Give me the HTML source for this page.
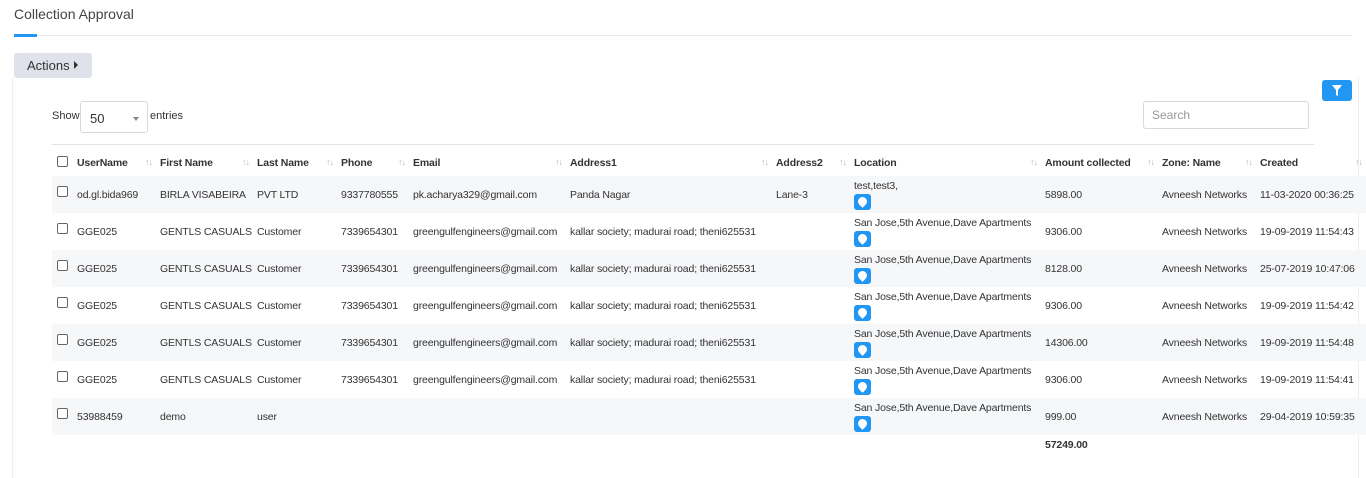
<!DOCTYPE html>
<html><head><meta charset="utf-8"><style>
*{box-sizing:border-box;margin:0;padding:0}
body{width:1366px;height:459px;overflow:hidden;background:#fff;font-family:"Liberation Sans",sans-serif;color:#333;font-size:10.5px;position:relative}
.title{position:absolute;left:14px;top:6px;font-size:14px;color:#444}
.hr{position:absolute;left:14px;top:35px;width:1338px;height:1px;background:#e8eaee}
.bl{position:absolute;left:14px;top:34px;width:23px;height:3px;background:#2196f3}
.act{position:absolute;left:14px;top:53px;width:78px;height:25px;background:#dfe2ea;border-radius:3px;font-size:13px;color:#333;padding:5px 0 0 13px}
.act i{display:inline-block;width:0;height:0;border-left:4px solid #333;border-top:4px solid transparent;border-bottom:4px solid transparent;margin-left:4px;vertical-align:1px}
.card{position:absolute;left:12px;top:78px;width:1347px;height:400px;border-left:1px solid #eceef2;border-right:1px solid #eceef2}
.filt{position:absolute;left:1322px;top:80px;width:30px;height:21px;background:#2196f3;border-radius:3px}
.show{position:absolute;left:52px;top:110px;font-size:11px}
.sel{position:absolute;left:80px;top:101px;width:68px;height:32px;border:1px solid #d5d9e2;border-radius:3px;font-size:13px;padding:9px 0 0 9px}
.sel i{position:absolute;right:8px;top:15px;border-top:4px solid #888;border-left:3px solid transparent;border-right:3px solid transparent}
.ent{position:absolute;left:150px;top:110px;font-size:11px}
.search{position:absolute;left:1143px;top:101px;width:166px;height:28px;border:1px solid #d5d9e2;border-radius:3px;color:#999;font-size:12px;padding:6px 0 0 8px}
.tl{position:absolute;left:52px;top:144px;width:1262px;height:1px;background:#e0e3e8}
table{position:absolute;left:52px;top:145px;border-collapse:collapse;table-layout:fixed;width:1314px;letter-spacing:-0.15px}
td,th{padding:0 0 0 4px;white-space:nowrap;overflow:hidden;text-align:left;vertical-align:middle;height:37px;position:relative}
th{height:31px;font-weight:bold;color:#333;font-size:10.5px;padding-top:4px}
th s{position:absolute;right:4px;top:12px;text-decoration:none;color:#bbb;font-size:9px;font-weight:normal;letter-spacing:-1px}
tr.g td{background:#f6f7f9}
.cb{display:inline-block;width:11px;height:11px;border:1px solid #666;border-radius:2px;background:#fff;margin-left:1px;vertical-align:middle;position:relative;top:-3px}
.loc{vertical-align:top;padding-top:4px;line-height:13px}
.pin{display:block;width:17px;height:16px;background:#2196f3;border-radius:3px;margin-top:1px;position:relative}
.pin:after{content:"";position:absolute;left:4px;top:3px;width:9px;height:9px;background:#fff;border-radius:50% 50% 50% 0;transform:rotate(-45deg)}
.tot td{height:20px;font-weight:bold}
</style></head><body>
<div class="title">Collection Approval</div>
<div class="hr"></div><div class="bl"></div>
<div class="act">Actions<i></i></div>
<div class="card"></div>
<div class="filt"><svg width="30" height="21" viewBox="0 0 30 21"><path d="M10 5h10l-4 5v6l-2-1v-5z" fill="#fff"/></svg></div>
<div class="show">Show</div>
<div class="sel">50<i></i></div>
<div class="ent">entries</div>
<div class="search">Search</div>
<div class="tl"></div>
<table>
<colgroup><col style="width:21px"><col style="width:83px"><col style="width:97px"><col style="width:84px"><col style="width:72px"><col style="width:157px"><col style="width:206px"><col style="width:78px"><col style="width:191px"><col style="width:117px"><col style="width:98px"><col style="width:110px"></colgroup>
<tr><th><span class="cb" style="top:-1px"></span></th><th>UserName<s>↑↓</s></th><th>First Name<s>↑↓</s></th><th>Last Name<s>↑↓</s></th><th>Phone<s>↑↓</s></th><th>Email<s>↑↓</s></th><th>Address1<s>↑↓</s></th><th>Address2<s>↑↓</s></th><th>Location<s>↑↓</s></th><th>Amount collected<s>↑↓</s></th><th>Zone: Name<s>↑↓</s></th><th>Created<s>↑↓</s></th></tr>
<tr class="g"><td><span class="cb"></span></td><td>od.gl.bida969</td><td>BIRLA VISABEIRA</td><td>PVT LTD</td><td>9337780555</td><td>pk.acharya329@gmail.com</td><td>Panda Nagar</td><td>Lane-3</td><td class="loc">test,test3,<span class="pin"></span></td><td>5898.00</td><td>Avneesh Networks</td><td>11-03-2020 00:36:25</td></tr>
<tr><td><span class="cb"></span></td><td>GGE025</td><td>GENTLS CASUALS</td><td>Customer</td><td>7339654301</td><td>greengulfengineers@gmail.com</td><td>kallar society; madurai road; theni625531</td><td></td><td class="loc">San Jose,5th Avenue,Dave Apartments<span class="pin"></span></td><td>9306.00</td><td>Avneesh Networks</td><td>19-09-2019 11:54:43</td></tr>
<tr class="g"><td><span class="cb"></span></td><td>GGE025</td><td>GENTLS CASUALS</td><td>Customer</td><td>7339654301</td><td>greengulfengineers@gmail.com</td><td>kallar society; madurai road; theni625531</td><td></td><td class="loc">San Jose,5th Avenue,Dave Apartments<span class="pin"></span></td><td>8128.00</td><td>Avneesh Networks</td><td>25-07-2019 10:47:06</td></tr>
<tr><td><span class="cb"></span></td><td>GGE025</td><td>GENTLS CASUALS</td><td>Customer</td><td>7339654301</td><td>greengulfengineers@gmail.com</td><td>kallar society; madurai road; theni625531</td><td></td><td class="loc">San Jose,5th Avenue,Dave Apartments<span class="pin"></span></td><td>9306.00</td><td>Avneesh Networks</td><td>19-09-2019 11:54:42</td></tr>
<tr class="g"><td><span class="cb"></span></td><td>GGE025</td><td>GENTLS CASUALS</td><td>Customer</td><td>7339654301</td><td>greengulfengineers@gmail.com</td><td>kallar society; madurai road; theni625531</td><td></td><td class="loc">San Jose,5th Avenue,Dave Apartments<span class="pin"></span></td><td>14306.00</td><td>Avneesh Networks</td><td>19-09-2019 11:54:48</td></tr>
<tr><td><span class="cb"></span></td><td>GGE025</td><td>GENTLS CASUALS</td><td>Customer</td><td>7339654301</td><td>greengulfengineers@gmail.com</td><td>kallar society; madurai road; theni625531</td><td></td><td class="loc">San Jose,5th Avenue,Dave Apartments<span class="pin"></span></td><td>9306.00</td><td>Avneesh Networks</td><td>19-09-2019 11:54:41</td></tr>
<tr class="g"><td><span class="cb"></span></td><td>53988459</td><td>demo</td><td>user</td><td></td><td></td><td></td><td></td><td class="loc">San Jose,5th Avenue,Dave Apartments<span class="pin"></span></td><td>999.00</td><td>Avneesh Networks</td><td>29-04-2019 10:59:35</td></tr>
<tr class="tot"><td></td><td></td><td></td><td></td><td></td><td></td><td></td><td></td><td></td><td>57249.00</td><td></td><td></td></tr>
</table>
</body></html>
